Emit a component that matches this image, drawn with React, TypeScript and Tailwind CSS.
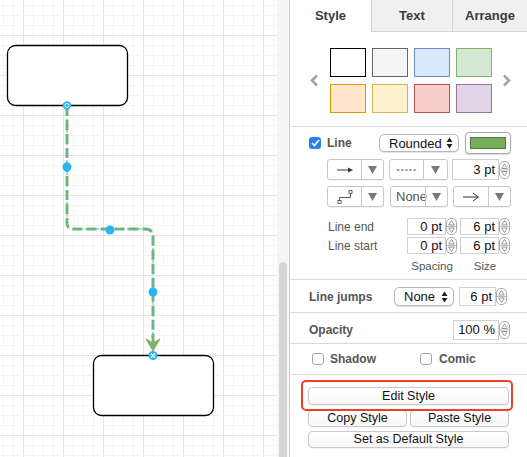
import React from "react";

const BLUE = "#29b6f2";

function Canvas() {
  const xs: number[] = [];
  for (let x = 3; x < 277; x += 10) xs.push(x);
  const ys: number[] = [];
  for (let y = 5; y < 457; y += 10) ys.push(y);
  const path = "M67 106 V223 Q67 229 73 229 H145 Q153 229 153 237 V345";
  return (
    <svg width="277" height="457" viewBox="0 0 277 457" className="block">
      <rect width="277" height="457" fill="#fff" />
      {xs.map((x) => (
        <line key={"x" + x} x1={x + 0.5} x2={x + 0.5} y1={0} y2={457} stroke={(x - 23) % 40 === 0 ? "#e5e5e5" : "#f5f5f5"} strokeWidth="1" />
      ))}
      {ys.map((y) => (
        <line key={"y" + y} y1={y + 0.5} y2={y + 0.5} x1={0} x2={277} stroke={(y - 35) % 40 === 0 ? "#e5e5e5" : "#f5f5f5"} strokeWidth="1" />
      ))}
      <rect x="7.5" y="45.5" width="120" height="60" rx="8" fill="#fff" stroke="#000" strokeWidth="1.3" />
      <rect x="93.5" y="355.5" width="120" height="60" rx="8" fill="#fff" stroke="#000" strokeWidth="1.3" />
      <path d={path} fill="none" stroke="#82b366" strokeWidth="3" strokeDasharray="10 4" />
      <path d={path} fill="none" stroke={BLUE} strokeWidth="1" strokeDasharray="3 3" />
      <path d="M146 339 L153 351 L160 339 L153 343 Z" fill="#82b366" stroke="#82b366" strokeWidth="1" />
      <circle cx="67" cy="105.5" r="4.2" fill={BLUE} />
      <circle cx="67" cy="105.5" r="2" fill="none" stroke="#fff" strokeWidth="1" />
      <circle cx="153" cy="355.5" r="4.5" fill={BLUE} />
      <path d="M151 353.5 L155 357.5 M155 353.5 L151 357.5" stroke="#fff" strokeWidth="1.2" />
      <circle cx="67" cy="167" r="4.5" fill={BLUE} />
      <circle cx="110" cy="230" r="4.5" fill={BLUE} />
      <circle cx="153" cy="292" r="4.5" fill={BLUE} />
    </svg>
  );
}

function Spinner({ h = 18 }: { h?: number }) {
  const m = h / 2;
  return (
    <svg width="11" height={h} viewBox={`0 0 11 ${h}`} className="shrink-0">
      <rect x="0.5" y="0.5" width="10" height={h - 1} rx="4.5" fill="#fff" stroke="#a9a9a9" />
      <path d={`M2.7 ${m - 1.5} L5.5 ${m - 6} L8.3 ${m - 1.5} Z`} fill="none" stroke="#8a8a8a" strokeWidth="0.9" />
      <line x1="0.5" x2="10.5" y1={m} y2={m} stroke="#a9a9a9" strokeWidth="0.8" />
      <path d={`M2.7 ${m + 1.5} L5.5 ${m + 6} L8.3 ${m + 1.5} Z`} fill="none" stroke="#8a8a8a" strokeWidth="0.9" />
    </svg>
  );
}

function NumInput({ w, h, value, sh }: { w: string; h: string; value: string; sh?: number }) {
  return (
    <div className="flex items-center">
      <div className={`${w} ${h} border border-[#d0d0d0] bg-white flex items-center justify-end pr-[3px] text-[13px] leading-none text-[#111]`}>
        {value}
      </div>
      <Spinner h={sh ?? 18} />
    </div>
  );
}

function Tri() {
  return (
    <svg width="9" height="8" viewBox="0 0 9 8">
      <path d="M0 0 H9 L4.5 8 Z" fill="#7a7a7a" />
    </svg>
  );
}

function Drop({ w, rw, children }: { w: string; rw: string; children: React.ReactNode }) {
  return (
    <div className={`${w} h-[21px] border border-[#c8c8c8] rounded-[3px] bg-white flex shadow-[0_1px_1px_rgba(0,0,0,0.06)]`}>
      <div className="flex-1 flex items-center justify-center overflow-hidden">{children}</div>
      <div className={`${rw} border-l border-[#c8c8c8] flex items-center justify-center`}>
        <Tri />
      </div>
    </div>
  );
}

function UpDown() {
  return (
    <svg width="7" height="12" viewBox="0 0 7 12" className="ml-auto">
      <path d="M0.5 5 L3.5 0.5 L6.5 5 Z" fill="#222" />
      <path d="M0.5 7 L3.5 11.5 L6.5 7 Z" fill="#222" />
    </svg>
  );
}

function Check({ on }: { on?: boolean }) {
  if (on)
    return (
      <div className="w-[12px] h-[12px] rounded-[3px] bg-[#2a7ff0] flex items-center justify-center shrink-0">
        <svg width="9" height="8" viewBox="0 0 9 8">
          <path d="M1 4 L3.5 6.5 L8 1" fill="none" stroke="#fff" strokeWidth="1.6" />
        </svg>
      </div>
    );
  return <div className="w-[12px] h-[12px] rounded-[3px] border border-[#a5a5a5] bg-white shrink-0" />;
}

function Chevron({ left }: { left?: boolean }) {
  return (
    <svg width="9" height="13" viewBox="0 0 9 13">
      <path d={left ? "M7 1.5 L2 6.5 L7 11.5" : "M2 1.5 L7 6.5 L2 11.5"} fill="none" stroke="#a6a6a6" strokeWidth="2.6" />
    </svg>
  );
}

const swatches = [
  ["#ffffff", "#000000"],
  ["#f5f5f5", "#666666"],
  ["#dae8fc", "#6c8ebf"],
  ["#d5e8d4", "#82b366"],
  ["#ffe6cc", "#d79b00"],
  ["#fff2cc", "#d6b656"],
  ["#f8cecc", "#b85450"],
  ["#e1d5e7", "#9673a6"],
];

function Btn({ w, h, children }: { w: string; h: string; children: React.ReactNode }) {
  return (
    <div className={`${w} ${h} rounded-[4px] border border-[#c9c9c9] bg-gradient-to-b from-white to-[#f7f7f7] flex items-center justify-center text-[12.5px] leading-none text-[#111] shadow-[0_1px_1px_rgba(0,0,0,0.05)]`}>
      {children}
    </div>
  );
}

function Panel() {
  return (
    <div className="w-[238px] h-[457px] border-l border-[#d0d0d0] bg-white flex flex-col text-[#333]">
      {/* tabs */}
      <div className="h-[32px] flex shrink-0 text-[13px] font-bold text-[#3a3a3a]">
        <div className="w-[81px] flex items-center justify-center bg-white">Style</div>
        <div className="w-[81px] flex items-center justify-center bg-[#f0f0f0] border-l border-b border-[#d6d6d6]">Text</div>
        <div className="flex-1 flex items-center justify-center bg-[#f0f0f0] border-l border-b border-[#d6d6d6]">Arrange</div>
      </div>
      {/* swatches */}
      <div className="h-[95px] shrink-0 border-b border-[#dadada] flex items-center pl-[20px] pt-[3px]">
        <Chevron left />
        <div className="ml-[11px] grid grid-cols-[repeat(4,36px)] gap-x-[6px] gap-y-[7px]">
          {swatches.map(([bg, bd]) => (
            <div key={bg} className="h-[29px] border-[1.5px]" style={{ backgroundColor: bg, borderColor: bd }} />
          ))}
        </div>
        <div className="ml-[10px]">
          <Chevron />
        </div>
      </div>
      {/* line section */}
      <div className="h-[153px] shrink-0 border-b border-[#dadada] flex flex-col">
        <div className="mt-[5px] h-[22px] flex items-center pl-[19px]">
          <Check on />
          <span className="ml-[6px] w-[52px] text-[12px] font-bold text-[#555]">Line</span>
          <div className="w-[80px] h-[18px] rounded-[5px] border border-[#b9b9b9] bg-white shadow-[0_1px_1px_rgba(0,0,0,0.12)] flex items-center pl-[9px] pr-[5px] text-[13px] leading-none text-[#111]">
            Rounded
            <UpDown />
          </div>
          <div className="ml-[6px] w-[46px] h-[22px] rounded-[4px] border border-[#a9a9a9] bg-white shadow-[0_1px_1px_rgba(0,0,0,0.15)] p-[4px]">
            <div className="w-full h-full bg-[#78ae5b] border border-[#4f7b3b]" />
          </div>
        </div>
        <div className="mt-[5px] h-[21px] flex items-center pl-[37px]">
          <Drop w="w-[57px]" rw="w-[22px]">
            <svg width="18" height="8" viewBox="0 0 18 8">
              <line x1="1" y1="4" x2="14" y2="4" stroke="#333" strokeWidth="1" />
              <path d="M12 1.5 L17 4 L12 6.5 Z" fill="#333" />
            </svg>
          </Drop>
          <div className="ml-[5px]">
            <Drop w="w-[59px]" rw="w-[24px]">
              <svg width="22" height="4" viewBox="0 0 22 4">
                <line x1="1" y1="2" x2="21" y2="2" stroke="#444" strokeWidth="1" strokeDasharray="2.5 1.6" />
              </svg>
            </Drop>
          </div>
          <div className="ml-[4px]">
            <NumInput w="w-[47px]" h="h-[21px]" value="3 pt" sh={18} />
          </div>
        </div>
        <div className="mt-[6px] h-[21px] flex items-center pl-[37px]">
          <Drop w="w-[57px]" rw="w-[22px]">
            <svg width="18" height="16" viewBox="0 0 18 16">
              <rect x="2" y="11.5" width="3" height="3" fill="none" stroke="#444" strokeWidth="0.8" />
              <rect x="13" y="1.5" width="3" height="3" fill="none" stroke="#444" strokeWidth="0.8" />
              <path d="M3.5 11.5 V8.5 H14.5 V4.5" fill="none" stroke="#444" strokeWidth="0.9" />
            </svg>
          </Drop>
          <div className="ml-[6px]">
            <div className="w-[58px] h-[21px] border border-[#c8c8c8] rounded-[3px] bg-white flex shadow-[0_1px_1px_rgba(0,0,0,0.06)]">
              <div className="w-[34px] flex items-center pl-[5px] text-[13px] leading-none text-[#555] whitespace-nowrap">None</div>
              <div className="flex-1 border-l border-[#c8c8c8] flex items-center justify-center">
                <Tri />
              </div>
            </div>
          </div>
          <div className="ml-[5px]">
            <Drop w="w-[58px]" rw="w-[22px]">
              <svg width="18" height="10" viewBox="0 0 18 10">
                <line x1="1" y1="5" x2="16" y2="5" stroke="#333" strokeWidth="1" />
                <path d="M11 1 L16.5 5 L11 9" fill="none" stroke="#333" strokeWidth="1" />
              </svg>
            </Drop>
          </div>
        </div>
        <div className="mt-[11px] h-[17px] flex items-center pl-[38px]">
          <span className="w-[79px] text-[12px] text-[#555]">Line end</span>
          <NumInput w="w-[39px]" h="h-[17px]" value="0 pt" sh={17} />
          <div className="ml-[3px]">
            <NumInput w="w-[39px]" h="h-[17px]" value="6 pt" sh={17} />
          </div>
        </div>
        <div className="mt-[2px] h-[17px] flex items-center pl-[38px]">
          <span className="w-[79px] text-[12px] text-[#555]">Line start</span>
          <NumInput w="w-[39px]" h="h-[17px]" value="0 pt" sh={17} />
          <div className="ml-[3px]">
            <NumInput w="w-[39px]" h="h-[17px]" value="6 pt" sh={17} />
          </div>
        </div>
        <div className="mt-[5px] flex pl-[117px] text-[11.5px] text-[#555] leading-[14px]">
          <span className="w-[50px] text-center">Spacing</span>
          <span className="ml-[3px] w-[50px] text-center">Size</span>
        </div>
      </div>
      {/* line jumps */}
      <div className="h-[33px] shrink-0 border-b border-[#dadada] flex items-center pl-[19px] pt-[1px]">
        <span className="w-[85px] text-[12px] font-bold text-[#555]">Line jumps</span>
        <div className="w-[60px] h-[19px] rounded-[5px] border border-[#b9b9b9] bg-white shadow-[0_1px_1px_rgba(0,0,0,0.12)] flex items-center pl-[9px] pr-[5px] text-[13px] leading-none text-[#111]">
          None
          <UpDown />
        </div>
        <div className="ml-[5px]">
          <NumInput w="w-[37px]" h="h-[19px]" value="6 pt" sh={17} />
        </div>
      </div>
      {/* opacity */}
      <div className="h-[31px] shrink-0 border-b border-[#dadada] flex items-center pl-[19px] pt-[3px]">
        <span className="w-[144px] text-[12px] font-bold text-[#555]">Opacity</span>
        <NumInput w="w-[46px]" h="h-[20px]" value="100 %" sh={18} />
      </div>
      {/* shadow / comic */}
      <div className="h-[31px] shrink-0 border-b border-[#dadada] flex items-center pl-[22px]">
        <Check />
        <span className="ml-[6px] w-[90px] text-[12px] font-bold text-[#555]">Shadow</span>
        <Check />
        <span className="ml-[7px] text-[12px] font-bold text-[#555]">Comic</span>
      </div>
      {/* buttons */}
      <div className="relative flex-1 pl-[18px] pt-[12px] flex flex-col">
        <Btn w="w-[201px]" h="h-[18px]">Edit Style</Btn>
        <div className="mt-[5px] flex gap-[3px]">
          <Btn w="w-[99px]" h="h-[17px]">Copy Style</Btn>
          <Btn w="w-[99px]" h="h-[17px]">Paste Style</Btn>
        </div>
        <div className="mt-[4px]">
          <Btn w="w-[201px]" h="h-[17px]">Set as Default Style</Btn>
        </div>
        <div className="absolute left-[11px] top-[5px] w-[212px] h-[31px] rounded-[5px] border-[2.5px] border-[#ec4027]" />
      </div>
    </div>
  );
}

export default function App() {
  return (
    <div className="flex w-[527px] h-[457px] overflow-hidden bg-white font-['Liberation_Sans',Arial,sans-serif]">
      <div className="w-[277px] h-[457px] overflow-hidden shrink-0">
        <Canvas />
      </div>
      <div className="w-[12px] h-[457px] bg-[#f5f5f5] shrink-0 flex flex-col">
        <div className="mt-[262px] ml-[2px] w-[8px] flex-1 rounded-t-full bg-[#d6d6d6]" />
      </div>
      <Panel />
    </div>
  );
}
